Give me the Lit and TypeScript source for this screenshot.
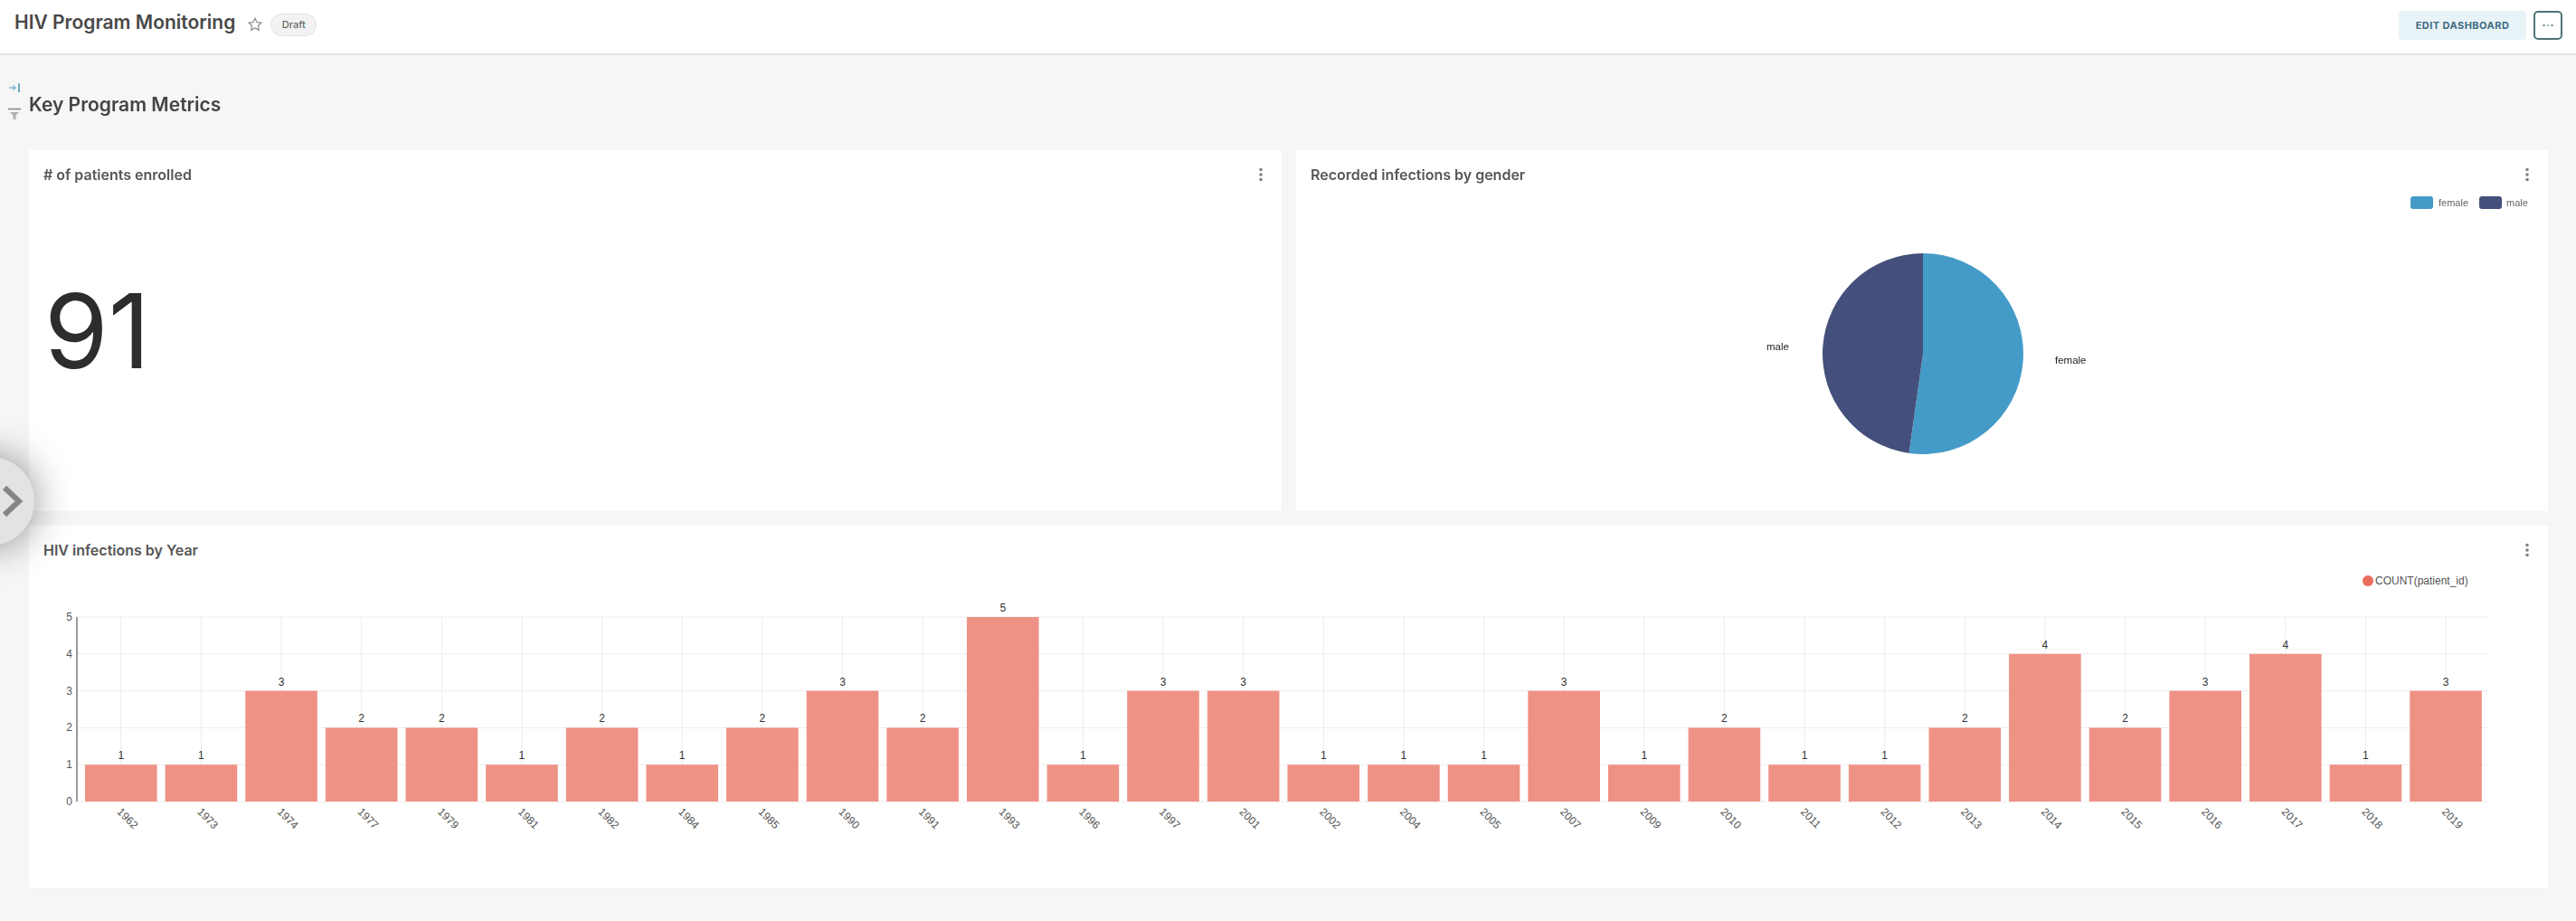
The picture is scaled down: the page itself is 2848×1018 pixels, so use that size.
import { LitElement, html, css, svg } from "lit";
import { customElement } from "lit/decorators.js";

const YEARS: [string, number][] = [
  ["1962", 1], ["1973", 1], ["1974", 3], ["1977", 2], ["1979", 2], ["1981", 1], ["1982", 2], ["1984", 1],
  ["1985", 2], ["1990", 3], ["1991", 2], ["1993", 5], ["1996", 1], ["1997", 3], ["2001", 3], ["2002", 1],
  ["2004", 1], ["2005", 1], ["2007", 3], ["2009", 1], ["2010", 2], ["2011", 1], ["2012", 1], ["2013", 2],
  ["2014", 4], ["2015", 2], ["2016", 3], ["2017", 4], ["2018", 1], ["2019", 3],
];

// chart coordinates are local to the svg, whose origin sits at page (32, 635)
const AX = 53, BASE = 251, UNIT = 40.8, RIGHT = 2720, BAR0 = 62, PITCH = 88.63, BAR_W = 79.6;

const kebab = html`<svg class="kebab" width="6" height="16" viewBox="0 0 6 16"><circle cx="3" cy="2.5" r="1.8"/><circle cx="3" cy="8" r="1.8"/><circle cx="3" cy="13.5" r="1.8"/></svg>`;

@customElement("app-root")
export class AppRoot extends LitElement {
  static styles = css`
    :host { display: block; min-height: 100vh; background: #f6f6f6; font-family: Inter, "Noto Sans", sans-serif; position: relative; overflow: hidden; }
    .page { height: 1018px; display: flex; flex-direction: column; filter: blur(0.45px); }
    header { height: 59px; flex: none; background: #fff; border-bottom: 2px solid #e2e2e2; display: flex; justify-content: space-between; padding: 0 15px 0 16px; }
    .left { display: flex; align-items: center; height: 54px; }
    h1 { margin: 0 13px 0 0; padding-bottom: 4px; font-size: 21px; line-height: 26px; font-weight: 600; color: #484848; }
    .star { margin-right: 8px; fill: none; stroke: #8a8a8a; stroke-width: 1.6; }
    .badge { width: 51px; height: 25px; box-sizing: border-box; border: 1px solid #e2e2e2; background: #f2f2f2; border-radius: 13px; display: flex; align-items: center; justify-content: center; font-size: 11px; font-weight: 500; color: #666; }
    .actions { display: flex; gap: 8px; padding-top: 12px; }
    .edit { width: 141px; height: 32px; border-radius: 4px; background: #e8f3f8; color: #3f6a80; font-size: 11px; font-weight: 700; letter-spacing: 0.45px; display: flex; align-items: center; justify-content: center; }
    .more { width: 32px; height: 32px; box-sizing: border-box; border: 2.5px solid #4f7272; border-radius: 5px; display: flex; align-items: center; justify-content: center; gap: 2px; }
    .more i { width: 2.5px; height: 2.5px; border-radius: 50%; background: #7f9a9f; }
    .main { flex: 1; display: flex; min-height: 0; }
    .rail { width: 32px; flex: none; padding-top: 30px; display: flex; flex-direction: column; align-items: center; gap: 16px; box-sizing: border-box; }
    .content { flex: 1; padding: 40px 31px 0 0; min-width: 0; }
    h2 { margin: 0 0 35px; font-size: 21px; line-height: 30px; font-weight: 600; color: #444; }
    .grid { display: grid; grid-template-columns: 1385px 1384px; grid-template-rows: 399px 400px; gap: 16px; }
    .card { background: #fff; display: flex; flex-direction: column; min-width: 0; }
    .wide { grid-column: 1 / -1; }
    .head { height: 54px; flex: none; box-sizing: border-box; padding: 0 20px 0 16px; display: flex; align-items: center; justify-content: space-between; }
    .head span { font-size: 16px; font-weight: 600; color: #555; }
    .kebab { fill: #808080; }
    .big { flex: 1; display: flex; align-items: center; padding: 0 0 54px 17px; font-size: 114px; line-height: 1; font-weight: 400; color: #2d2d2d; }
    .chart { display: block; flex: 1; min-height: 0; overflow: visible; }
    .chart text { font-family: "Liberation Sans", Arial, sans-serif; }
    .pull { position: absolute; left: -60px; top: 505px; width: 98px; height: 98px; border-radius: 50%; background: #e3e3e3; box-shadow: 0 0 44px rgba(0,0,0,.45); display: flex; align-items: center; justify-content: flex-end; padding-right: 12px; box-sizing: border-box; }
    .pull svg { fill: none; stroke: #858585; stroke-width: 6; }
  `;

  private pie() {
    const cx = 693, cy = 171, r = 111;
    const a = (188 * Math.PI) / 180;
    const ex = cx + r * Math.sin(a), ey = cy - r * Math.cos(a);
    return svg`
      <rect x="1232" y="-3" width="25" height="14" rx="3" fill="#459bc7"/>
      <text x="1263" y="8" font-size="11" fill="#666">female</text>
      <rect x="1308" y="-3" width="25" height="14" rx="3" fill="#44507b"/>
      <text x="1338" y="8" font-size="11" fill="#666">male</text>
      <path d="M${cx} ${cy}L${cx} ${cy - r}A${r} ${r} 0 1 1 ${ex} ${ey}Z" fill="#459bc7"/>
      <path d="M${cx} ${cy}L${ex} ${ey}A${r} ${r} 0 0 1 ${cx} ${cy - r}Z" fill="#44507b"/>
      <text x="520" y="167" font-size="11.5" fill="#222">male</text>
      <text x="839" y="182" font-size="11.5" fill="#222">female</text>`;
  }

  private bars() {
    const ticks = [0, 1, 2, 3, 4, 5];
    return svg`
      <circle cx="2586" cy="7" r="6" fill="#e96f5f"/>
      <text x="2594" y="11" font-size="12" fill="#555">COUNT(patient_id)</text>
      ${ticks.map((t) => svg`
        <line x1=${AX} x2=${RIGHT} y1=${BASE - t * UNIT} y2=${BASE - t * UNIT} stroke="#ececec" stroke-width="1"/>
        <text x=${AX - 5} y=${BASE - t * UNIT + 4} font-size="12" text-anchor="end" fill="#555">${t}</text>`)}
      ${YEARS.map((_, i) => {
        const x = BAR0 + PITCH * i + BAR_W / 2;
        return svg`<line x1=${x} x2=${x} y1=${BASE - 5 * UNIT} y2=${BASE} stroke="#ececec" stroke-width="1"/>`;
      })}
      <line x1=${AX} x2=${AX} y1=${BASE - 5 * UNIT} y2=${BASE} stroke="#9a9a9a" stroke-width="2"/>
      ${YEARS.map(([y, v], i) => {
        const x = BAR0 + PITCH * i;
        const c = x + BAR_W / 2;
        return svg`
          <rect x=${x} y=${BASE - v * UNIT} width=${BAR_W} height=${v * UNIT} fill="#ef9286"/>
          <text x=${c} y=${BASE - v * UNIT - 6} font-size="12" text-anchor="middle" fill="#333">${v}</text>
          <text x=${c - 5} y=${BASE + 12} font-size="12" fill="#555" transform="rotate(45 ${c - 5} ${BASE + 12})">${y}</text>`;
      })}`;
  }

  render() {
    return html`
      <div class="page">
        <header>
          <div class="left">
            <h1>HIV Program Monitoring</h1>
            <svg class="star" width="18" height="18" viewBox="0 0 24 24"><path d="M12 3l2.8 5.9 6.4.8-4.7 4.4 1.2 6.4L12 17.4l-5.7 3.1 1.2-6.4-4.7-4.4 6.4-.8z"/></svg>
            <div class="badge">Draft</div>
          </div>
          <div class="actions">
            <div class="edit">EDIT DASHBOARD</div>
            <div class="more"><i></i><i></i><i></i></div>
          </div>
        </header>
        <div class="main">
          <div class="rail">
            <svg width="14" height="12" viewBox="0 0 14 12" fill="none" stroke="#7fb6d2" stroke-width="1.4"><path d="M1 6h7M5.5 3.5L8 6 5.5 8.5"/><path d="M12 1v10" stroke="#3d8aa8"/></svg>
            <svg width="16" height="14" viewBox="0 0 16 14"><path d="M1 1.5h14" stroke="#8a8a8a" stroke-width="1.6"/><path d="M3 5h10l-3.5 3.6V13h-3V8.6z" fill="#b0b0b0"/></svg>
          </div>
          <div class="content">
            <h2>Key Program Metrics</h2>
            <div class="grid">
              <section class="card">
                <div class="head"><span># of patients enrolled</span>${kebab}</div>
                <div class="big">91</div>
              </section>
              <section class="card">
                <div class="head"><span>Recorded infections by gender</span>${kebab}</div>
                <svg class="chart" viewBox="0 0 1384 345">${this.pie()}</svg>
              </section>
              <section class="card wide">
                <div class="head"><span>HIV infections by Year</span>${kebab}</div>
                <svg class="chart" viewBox="0 0 2785 346">${this.bars()}</svg>
              </section>
            </div>
          </div>
        </div>
        <div class="pull"><svg width="24" height="36" viewBox="0 0 24 36"><path d="M3 3l16 15L3 33"/></svg></div>
      </div>
    `;
  }
}
